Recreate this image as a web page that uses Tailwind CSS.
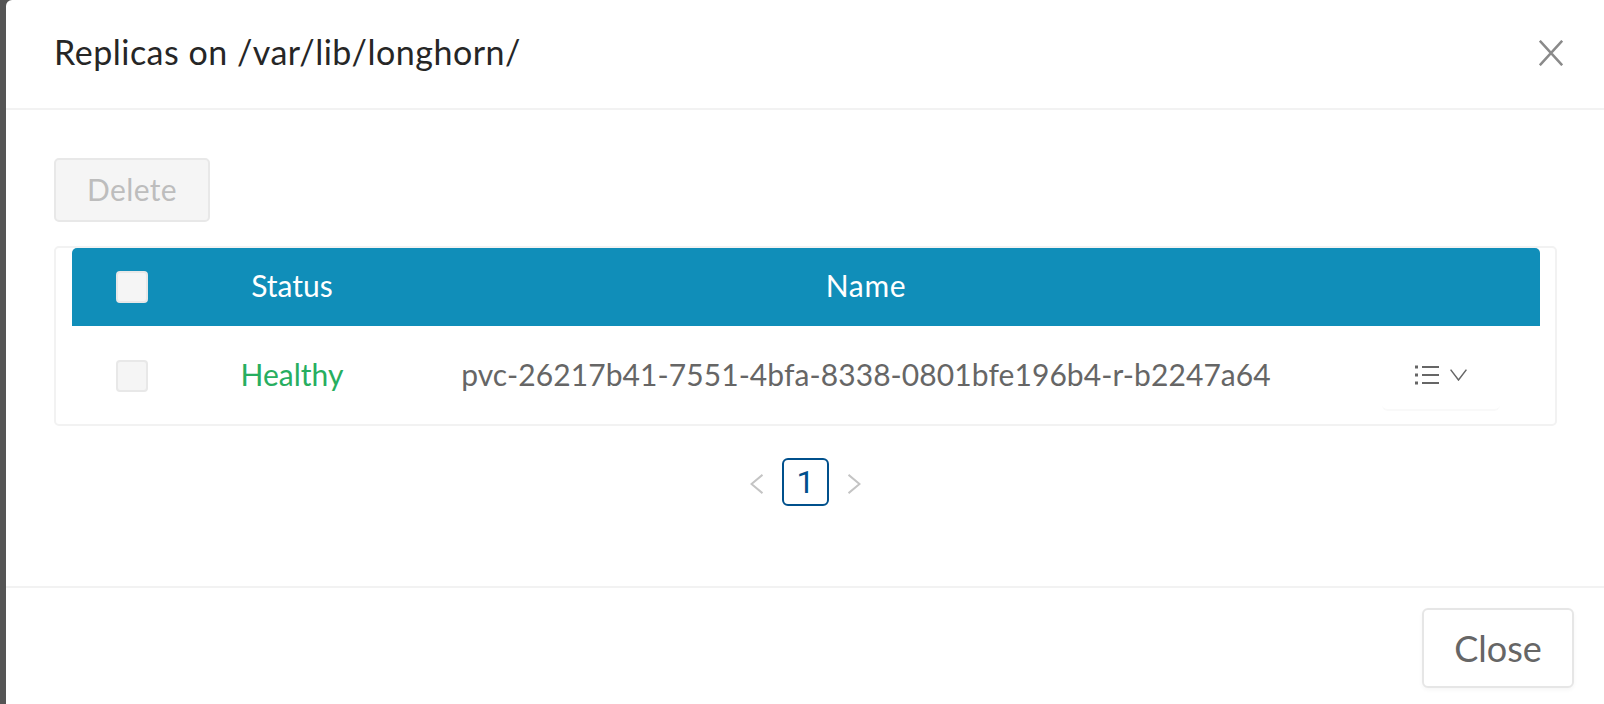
<!DOCTYPE html>
<html lang="en">
<head>
    <meta charset="UTF-8">
    <title>Replicas on /var/lib/longhorn/</title>
    <script src="https://cdn.jsdelivr.net/npm/@tailwindcss/browser@4"></script>
</head>
<body class="bg-[#555555] h-[704px] overflow-hidden font-['Lato','Liberation_Sans',sans-serif]">
    <div class="ml-[6px] h-[704px] bg-white rounded-tl-[6px] flex flex-col">
        <!-- Header -->
        <header class="h-[110px] shrink-0 border-b-2 border-[#f2f2f2] pl-[48px] pr-[41px] flex items-center justify-between">
            <h1 class="text-[34px] tracking-[0.5px] text-[#262626] leading-none pb-[4px]">Replicas on /var/lib/longhorn/</h1>
            <svg class="w-[24px] h-[26px] mb-[3px]" viewBox="0 0 24 26" fill="none" stroke="#8a8a8a" stroke-width="2.6">
                <path d="M0.8 0.8 L23.2 25.2 M23.2 0.8 L0.8 25.2"/>
            </svg>
        </header>

        <!-- Body -->
        <main class="h-[476px] shrink-0 pt-[48px] pl-[48px] pr-[47px]">
            <button class="block w-[156px] h-[64px] bg-[#f5f5f5] border-2 border-[#e8e8e8] rounded-[5px] text-[30px] tracking-[0.4px] text-[#bdbdbd] pb-[2px]">Delete</button>

            <div class="mt-[24px] h-[180px] border-2 border-[#f2f2f2] rounded-[5px] pl-[16px] pr-[15px]">
                <div class="flex items-center h-[78px] bg-[#108eb9] rounded-t-[5px] text-white text-[30px]">
                    <div class="w-[140px] pl-[44px]">
                        <div class="w-[32px] h-[32px] bg-[#f5f5f5] border-2 border-[#e8e8e8] rounded-[4px]"></div>
                    </div>
                    <div class="w-[160px] text-center pb-[3px]">Status</div>
                    <div class="w-[988px] text-center pb-[3px]"><span class="tracking-[0.7px]">Name</span></div>
                </div>
                <div class="flex items-center h-[98px] text-[30px]">
                    <div class="w-[140px] pl-[44px] mt-[2px]">
                        <div class="w-[32px] h-[32px] bg-[#f5f5f5] border-2 border-[#e8e8e8] rounded-[4px]"></div>
                    </div>
                    <div class="w-[160px] text-center text-[#27ae60] pb-[1px]">Healthy</div>
                    <div class="w-[988px] text-center text-[#666666] whitespace-nowrap tracking-[0.08px] pb-[1px]">pvc-26217b41-7551-4bfa-8338-0801bfe196b4-r-b2247a64</div>
                    <div class="ml-[22px] w-[118px] h-[70px] mt-[2px] border-b-2 border-[#f9f9f9] rounded-b-[6px] flex items-center justify-center gap-[11px]">
                        <svg class="w-[24px] h-[20px]" viewBox="0 0 24 20" fill="none" stroke="#666666">
                            <path stroke-width="2" d="M7 2 H24 M7 10 H24 M7 18 H24"/>
                            <path stroke-width="3" stroke-dasharray="3 5" d="M1.5 0.5 V20"/>
                        </svg>
                        <svg class="w-[17px] h-[12px]" viewBox="0 0 17 12" fill="none" stroke="#666666" stroke-width="1.5">
                            <path d="M0.6 0.6 L8.5 11 L16.4 0.6"/>
                        </svg>
                    </div>
                </div>
            </div>

            <!-- Pagination -->
            <div class="mt-[32px] flex items-center justify-center gap-[19px]">
                <svg class="w-[13px] h-[20px] mt-[3px]" viewBox="0 0 13 20" fill="none" stroke="#c4c4c4" stroke-width="2">
                    <path d="M12.5 0.8 L1.5 10 L12.5 19.2"/>
                </svg>
                <div class="w-[47px] h-[48px] border-2 border-[#00508c] rounded-[6px] flex items-center justify-center text-[32px] text-[#00508c] font-['Roboto',sans-serif]">1</div>
                <svg class="w-[13px] h-[20px] mt-[3px]" viewBox="0 0 13 20" fill="none" stroke="#c4c4c4" stroke-width="2">
                    <path d="M0.5 0.8 L11.5 10 L0.5 19.2"/>
                </svg>
            </div>
        </main>

        <!-- Footer -->
        <footer class="flex-1 border-t-2 border-[#f2f2f2] pt-[20px] pr-[30px] flex justify-end items-start">
            <button class="w-[152px] h-[80px] bg-white border-2 border-[#e6e6e6] rounded-[6px] shadow-[0_2px_4px_rgba(0,0,0,0.04)] text-[36px] text-[#666666]">Close</button>
        </footer>
    </div>
</body>
</html>
